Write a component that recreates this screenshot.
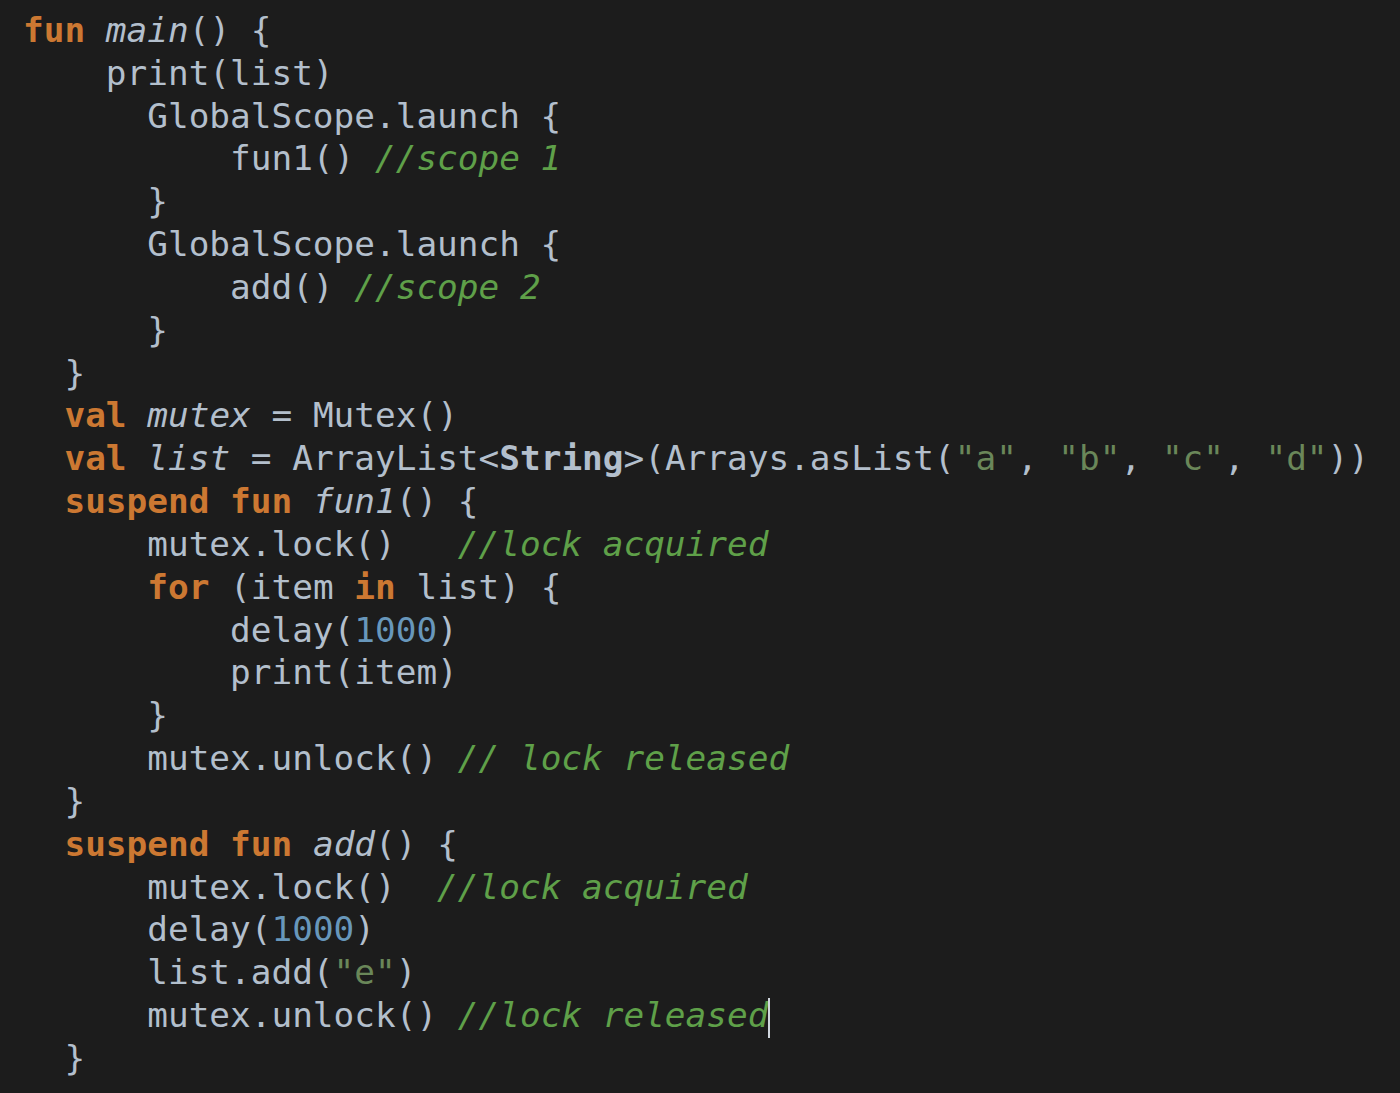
import React from 'react';

type Tok = [string, string?];

const K = 'text-[#cc7832] font-bold';
const I = 'italic';
const C = 'italic text-[#5fa049]';
const S = 'text-[#6a8759]';
const N = 'text-[#6897bb]';
const B = 'font-bold';

const lines: Tok[][] = [
  [['fun', K], [' '], ['main', I], ['() {']],
  [['    print(list)']],
  [['      GlobalScope.launch {']],
  [['          fun1() '], ['//scope 1', C]],
  [['      }']],
  [['      GlobalScope.launch {']],
  [['          add() '], ['//scope 2', C]],
  [['      }']],
  [['  }']],
  [['  '], ['val', K], [' '], ['mutex', I], [' = Mutex()']],
  [['  '], ['val', K], [' '], ['list', I], [' = ArrayList<'], ['String', B], ['>(Arrays.asList('], ['"a"', S], [', '], ['"b"', S], [', '], ['"c"', S], [', '], ['"d"', S], ['))']],
  [['  '], ['suspend', K], [' '], ['fun', K], [' '], ['fun1', I], ['() {']],
  [['      mutex.lock()   '], ['//lock acquired', C]],
  [['      '], ['for', K], [' (item '], ['in', K], [' list) {']],
  [['          delay('], ['1000', N], [')']],
  [['          print(item)']],
  [['      }']],
  [['      mutex.unlock() '], ['// lock released', C]],
  [['  }']],
  [['  '], ['suspend', K], [' '], ['fun', K], [' '], ['add', I], ['() {']],
  [['      mutex.lock()  '], ['//lock acquired', C]],
  [['      delay('], ['1000', N], [')']],
  [['      list.add('], ['"e"', S], [')']],
  [['      mutex.unlock() '], ['//lock released', C]],
  [['  }']],
];

export default function App() {
  return (
    <div className="w-[1400px] h-[1093px] overflow-hidden bg-[#1c1c1c] pl-[23px] pt-[9px]">
      <pre
        className="text-[34.4px] leading-[42.83px] text-[#b3bfcc] whitespace-pre"
        style={{ fontFamily: '"DejaVu Sans Mono", "Liberation Mono", monospace' }}
      >
        {lines.map((line, i) => (
          <div key={i} className="h-[42.83px]">
            {line.map(([text, cls], j) => (
              <span key={j} className={cls}>
                {text}
              </span>
            ))}
            {i === lines.length - 2 && (
              <span className="inline-block w-[2px] h-[40px] bg-[#d0d6dd] align-middle" />
            )}
          </div>
        ))}
      </pre>
    </div>
  );
}
